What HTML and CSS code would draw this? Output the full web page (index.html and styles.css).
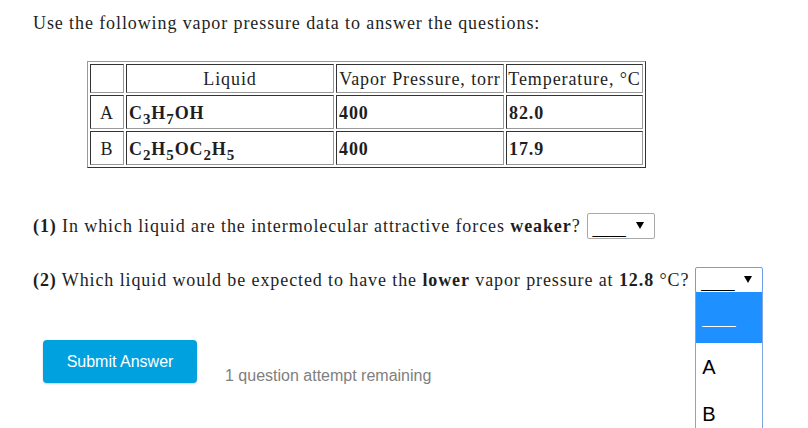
FILE: index.html
```html
<!DOCTYPE html>
<html lang="en">

<head>
    <meta charset="UTF-8">
    <meta name="viewport" content="width=device-width, initial-scale=1.0">
    <title>Vapor Pressure</title>
    <link rel="stylesheet" href="styles.css">
</head>

<body>
    <div class="page">
        <p class="intro">Use the following vapor pressure data to answer the questions:</p>

        <table class="data-table">
            <tr>
                <th class="col-key"></th>
                <th class="col-liquid">Liquid</th>
                <th class="col-vapor">Vapor Pressure, torr</th>
                <th class="col-temp">Temperature, &deg;C</th>
            </tr>
            <tr>
                <td class="key">A</td>
                <td>C<sub>3</sub>H<sub>7</sub>OH</td>
                <td>400</td>
                <td>82.0</td>
            </tr>
            <tr>
                <td class="key">B</td>
                <td>C<sub>2</sub>H<sub>5</sub>OC<sub>2</sub>H<sub>5</sub></td>
                <td>400</td>
                <td>17.9</td>
            </tr>
        </table>

        <div class="question q1">
            <span><b>(1)</b> In which liquid are the intermolecular attractive forces <b>weaker</b>?</span>
            <span class="select">
                <span class="select-value">____</span>
                <svg class="select-arrow" width="8" height="7" viewBox="0 0 8 7"><polygon points="0,0 8,0 4,7" fill="#000"/></svg>
            </span>
        </div>

        <div class="question q2">
            <span><b>(2)</b> Which liquid would be expected to have the <b>lower</b> vapor pressure at <b>12.8</b> &deg;C?</span>
            <span class="select open">
                <span class="select-value">____</span>
                <svg class="select-arrow" width="8" height="7" viewBox="0 0 8 7"><polygon points="0,0 8,0 4,7" fill="#000"/></svg>
                <span class="options">
                    <span class="option selected">____</span>
                    <span class="option">A</span>
                    <span class="option last">B</span>
                </span>
            </span>
        </div>

        <div class="actions">
            <button type="button" class="submit">Submit Answer</button>
            <span class="attempts">1 question attempt remaining</span>
        </div>
    </div>
</body>

</html>
```

FILE: styles.css
```css
html,
body {
    height: 100%;
}

body {
    margin: 0;
    color: #1e1e1e;
    font-family: "Liberation Serif", "Times New Roman", serif;
    font-size: 18px;
    letter-spacing: 0.9px;
    background: #ffffff;
}

.page {
    padding: 13px 0 0 33px;
}

.intro {
    margin: 0;
    line-height: 21px;
}

.data-table {
    margin: 27px 0 0 54px;
    width: 559px;
    table-layout: fixed;
    border-collapse: separate;
    border-spacing: 2px;
    border: 1px solid;
    border-color: #999 #333 #333 #999;
    line-height: 20px;
}

.data-table th,
.data-table td {
    box-sizing: border-box;
    border: 1px solid;
    border-color: #333 #999 #999 #333;
    padding: 4px 1px 3px;
    white-space: nowrap;
}

.data-table th {
    font-weight: normal;
    text-align: center;
}

.data-table td {
    font-weight: bold;
    text-align: left;
    padding: 7px 2px 5px;
}

.data-table td.key {
    font-weight: normal;
    text-align: center;
}

.data-table sub {
    line-height: 0;
}

.col-key { width: 34px; }
.col-liquid { width: 208px; }
.col-vapor { width: 168px; }
.col-temp { width: 137px; }

.question {
    display: flex;
    align-items: center;
    gap: 6px;
    line-height: 21px;
}

.q1 {
    margin-top: 45px;
}

.q2 {
    margin-top: 28px;
}

.select {
    position: relative;
    display: inline-flex;
    align-items: flex-start;
    box-sizing: border-box;
    width: 68px;
    height: 26px;
    padding: 0 10px 0 5px;
    border: 1px solid #a9a9a9;
    border-radius: 2px;
    font-family: "Liberation Sans", Arial, sans-serif;
    font-size: 15px;
    letter-spacing: normal;
    color: #000;
}

.select-value {
    padding-top: 5px;
    line-height: 19px;
    width: 33px;
}

.select-arrow {
    margin: 8px 0 0 10px;
}

.select.open {
    border-color: #6d9eeb;
}

.options {
    position: absolute;
    top: 100%;
    left: -1px;
    width: 68px;
    box-sizing: border-box;
    display: flex;
    flex-direction: column;
    border: 1px solid #7ea6e0;
    border-top: none;
    border-bottom: none;
    background: #fff;
}

.option {
    padding: 13px 6px 11px;
    font-size: 20px;
    line-height: 23px;
    color: #000;
}

.option.selected {
    padding: 15px 6px 13px;
    font-size: 15px;
    background: #1e90ff;
    color: #fff;
}

.option.last {
    padding-bottom: 2px;
}

.actions {
    display: flex;
    align-items: flex-start;
    margin: 47px 0 0 10px;
}

.submit {
    width: 154px;
    height: 43px;
    border: none;
    border-radius: 4px;
    background-color: #00a1df;
    box-shadow: 0 1px 2px rgba(0, 0, 0, 0.2);
    color: #fff;
    font-family: "Liberation Sans", Arial, sans-serif;
    font-size: 16px;
    cursor: pointer;
}

.attempts {
    margin: 27px 0 0 28px;
    color: #808080;
    font-family: "Liberation Sans", Arial, sans-serif;
    font-size: 16px;
    letter-spacing: normal;
    line-height: 18px;
}
```
